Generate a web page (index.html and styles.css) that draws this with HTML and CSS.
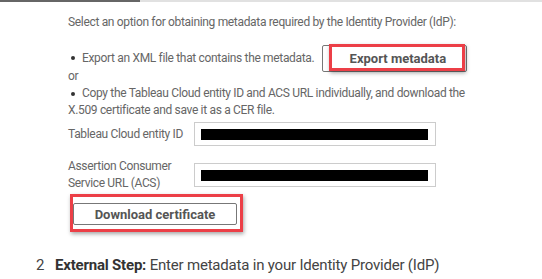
FILE: index.html
```html
<!DOCTYPE html>
<html lang="en">
<head>
  <meta charset="UTF-8">
  <meta name="viewport" content="width=device-width, initial-scale=1.0">
  <link rel="stylesheet" href="styles.css">
  <title>SAML setup</title>
</head>
<body>
  <div class="progress"><div class="progress_fill"></div></div>

  <div class="step_body">
    <p class="intro">Select an option for obtaining metadata required by the Identity Provider (IdP):</p>

    <div class="option option_export">
      <span class="bullet"></span>
      <span>Export an XML file that contains the metadata.</span>
      <span class="btn_wrap btn_export">
        <button class="btn">Export metadata</button>
        <span class="mark"></span>
      </span>
    </div>

    <p class="or">or</p>

    <div class="option">
      <span class="bullet"></span>
      <span>Copy the Tableau Cloud entity ID and ACS URL individually, and download the</span>
    </div>
    <p class="cont">X.509 certificate and save it as a CER file.</p>

    <div class="field_row">
      <label class="field_label">Tableau Cloud entity ID</label>
      <div class="field"><span class="redact"></span></div>
    </div>

    <div class="field_row field_row_acs">
      <label class="field_label">Assertion Consumer<br>Service URL (ACS)</label>
      <div class="field"><span class="redact"></span></div>
    </div>

    <span class="btn_wrap btn_download">
      <button class="btn">Download certificate</button>
      <span class="mark"></span>
    </span>
  </div>

  <div class="step">
    <span class="step_num">2</span>
    <span><b>External Step:</b> Enter metadata in your Identity Provider (IdP)</span>
  </div>
</body>
</html>
```

FILE: styles.css
```css
* {
  box-sizing: border-box;
}

body {
  margin: 0;
  background: #fff;
  font-family: Roboto, "Liberation Sans", sans-serif;
  color: #666;
  font-size: 12px;
  letter-spacing: -0.33px;
}

.progress {
  height: 2px;
  background: #e1e1e1;
}

.progress_fill {
  width: 140px;
  height: 100%;
  background: #666;
}

.step_body {
  padding-left: 68px;
}

.intro {
  margin: 0;
  padding-top: 12px;
  line-height: 17px;
}

.option {
  display: flex;
  align-items: center;
  line-height: 17px;
}

.option_export {
  margin-top: 17px;
  height: 20px;
}

.bullet {
  width: 4px;
  height: 4px;
  border-radius: 50%;
  background: #333;
  margin: 0 7px 0 3px;
}

.or,
.cont {
  margin: 0;
  line-height: 17px;
}

.btn_wrap {
  position: relative;
}

.btn {
  display: block;
  background: #fff;
  border: 1px solid #777;
  border-radius: 2px;
  font-family: inherit;
  font-weight: bold;
  font-size: 13px;
  color: #555;
  padding: 0;
}

.btn_export {
  margin-left: 8px;
}

.btn_export .btn {
  width: 145px;
  height: 27px;
  padding-left: 6px;
}

.mark {
  position: absolute;
  border: 3px solid #ec3f47;
  box-shadow: 1px 2px 4px rgba(0, 0, 0, 0.35);
}

.btn_export .mark {
  left: 7px;
  right: 2px;
  top: -1px;
  bottom: 1px;
}

.field_row {
  display: flex;
  align-items: center;
  margin-top: 3px;
}

.field_row_acs {
  margin-top: 12px;
}

.field_label {
  width: 126px;
  line-height: 17px;
}

.field {
  width: 242px;
  height: 24px;
  border: 1px solid #ccc;
  padding: 6px 7px 0 6px;
}

.redact {
  display: block;
  height: 11px;
  background: #000;
}

.btn_download {
  display: block;
  width: 164px;
  margin: 11px 0 0 5px;
}

.btn_download .btn {
  width: 164px;
  height: 22px;
}

.btn_download .mark {
  left: -3px;
  right: -6px;
  top: -9px;
  bottom: -7px;
}

.step {
  display: flex;
  margin-top: 31px;
  padding-left: 36px;
  font-size: 15px;
  letter-spacing: -0.2px;
  color: #444;
  line-height: 18px;
}

.step_num {
  width: 19px;
}

.step b {
  color: #333;
}
```
